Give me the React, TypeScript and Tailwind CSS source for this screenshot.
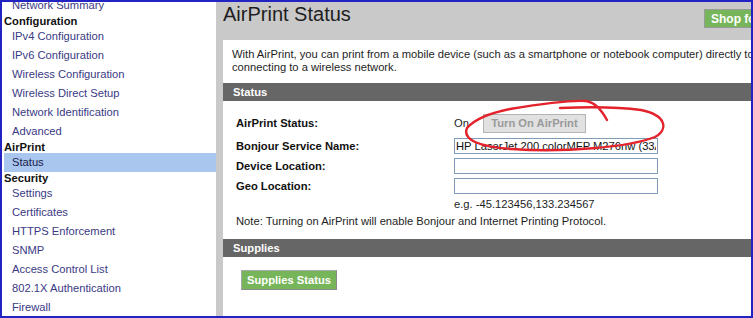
import React from 'react';

type NavEntry = { label: string; heading?: boolean; active?: boolean };

const nav: NavEntry[] = [
  { label: 'Network Summary' },
  { label: 'Configuration', heading: true },
  { label: 'IPv4 Configuration' },
  { label: 'IPv6 Configuration' },
  { label: 'Wireless Configuration' },
  { label: 'Wireless Direct Setup' },
  { label: 'Network Identification' },
  { label: 'Advanced' },
  { label: 'AirPrint', heading: true },
  { label: 'Status', active: true },
  { label: 'Security', heading: true },
  { label: 'Settings' },
  { label: 'Certificates' },
  { label: 'HTTPS Enforcement' },
  { label: 'SNMP' },
  { label: 'Access Control List' },
  { label: '802.1X Authentication' },
  { label: 'Firewall' },
];

const Sidebar: React.FC = () => (
  <aside className="w-[214px] shrink-0 bg-white pl-[2px]">
    <div className="-mt-[6px]">
      {nav.map((item) =>
        item.heading ? (
          <div key={item.label} className="h-[12px] flex items-center text-[11.2px] font-bold text-[#111]">
            {item.label}
          </div>
        ) : (
          <div
            key={item.label}
            className={`h-[19px] flex items-center pl-[8px] text-[11.2px] ${
              item.active ? 'bg-[#a9c6ef] text-[#1a1a4a]' : 'text-[#3a3a84]'
            }`}
          >
            {item.label}
          </div>
        )
      )}
    </div>
  </aside>
);

const Field: React.FC<{ value?: string }> = ({ value = '' }) => (
  <input
    readOnly
    defaultValue={value}
    className="h-[16px] w-[204px] border border-[#7f9db9] px-[1px] text-[11.2px] leading-[14px] text-[#111] outline-none"
  />
);

const Row: React.FC<{ label: string; className: string; children: React.ReactNode }> = ({ label, className, children }) => (
  <div className={`flex items-center ${className}`}>
    <div className="w-[218px] shrink-0 font-bold text-[#111]">{label}</div>
    <div className="flex items-center">{children}</div>
  </div>
);

export default function App() {
  return (
    <div className="relative w-[753px] h-[318px] overflow-hidden font-['Liberation_Sans',Arial,sans-serif]">
      <div className="flex w-full h-full border-2 border-[#2323c4] overflow-hidden">
        <Sidebar />

        <main className="flex-1 min-w-0 bg-[#c9c9c9] pl-[7px] flex flex-col overflow-hidden">
          <div className="h-[38px] shrink-0 flex">
            <h1 className="w-[481px] shrink-0 text-[20px] leading-[24px] text-[#1e1e1e]">AirPrint Status</h1>
            <button className="shrink-0 mt-[7px] h-[19px] px-[6px] bg-[#77b55a] border border-[#9a9a9a] text-white text-[12px] font-bold whitespace-nowrap leading-none">
              Shop for Supplies
            </button>
          </div>

          <section className="flex-1 w-[700px] bg-white text-[11.2px] text-[#1e1e1e]">
            <p className="pt-[8px] pl-[9px] leading-[13px] whitespace-nowrap">
              With AirPrint, you can print from a mobile device (such as a smartphone or notebook computer) directly to this printer by
              <br />
              connecting to a wireless network.
            </p>

            <div className="mt-[9px] h-[18px] bg-[#666] pl-[10px] flex items-center text-white font-bold">Status</div>

            <div className="pl-[13px] pt-[13px]">
              <Row label="AirPrint Status:" className="h-[19px]">
                <span>On</span>
                <button
                  disabled
                  className="ml-[14px] h-[19px] w-[103px] bg-[#e1e1e1] border border-[#b4b4b4] text-[#9a9a9a] font-bold text-[11.2px]"
                >
                  Turn On AirPrint
                </button>
              </Row>
              <Row label="Bonjour Service Name:" className="h-[16px] mt-[5px]">
                <Field value="HP LaserJet 200 colorMFP M276nw (33A4F2)" />
              </Row>
              <Row label="Device Location:" className="h-[16px] mt-[4px]">
                <Field />
              </Row>
              <Row label="Geo Location:" className="h-[16px] mt-[4px]">
                <Field />
              </Row>
              <div className="h-[14px] mt-[3px] pl-[218px] flex items-center">e.g. -45.123456,133.234567</div>
              <div className="h-[14px] mt-[3px] flex items-center">
                Note: Turning on AirPrint will enable Bonjour and Internet Printing Protocol.
              </div>
            </div>

            <div className="mt-[11px] h-[18px] bg-[#666] pl-[10px] flex items-center text-white font-bold">Supplies</div>

            <div className="pl-[18px] pt-[13px]">
              <button className="h-[20px] w-[96px] bg-[#77b55a] border border-[#a8a8a8] border-r-[#8a8a8a] border-b-[#8a8a8a] text-white font-bold text-[11.2px]">
                Supplies Status
              </button>
            </div>
          </section>
        </main>
      </div>

      {/* hand-drawn red annotation */}
      <svg className="absolute left-0 top-0 pointer-events-none" width="753" height="318" viewBox="0 0 753 318">
        <path
          d="M607 120 C601 109 593 102 586 101 C570 100 540 104 510 109 C490 113 474 120 467 128 C462 140 480 147 512 149 C562 153 630 147 655 137 C669 129 666 115 641 110 C612 106 582 107 560 108"
          fill="none"
          stroke="#e3222c"
          strokeWidth="2.4"
          strokeLinecap="round"
        />
      </svg>
    </div>
  );
}
